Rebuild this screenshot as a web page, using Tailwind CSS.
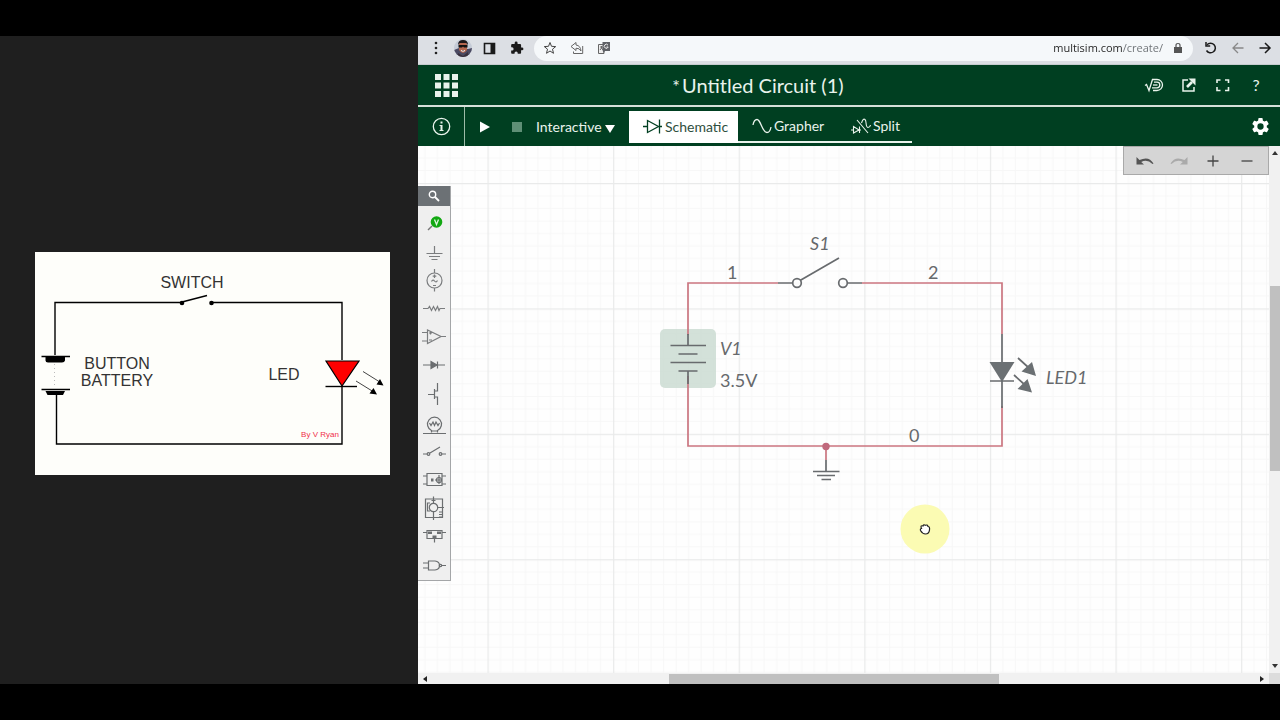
<!DOCTYPE html>
<html lang="en">
<head>
<meta charset="utf-8">
<title>Untitled Circuit (1)</title>
<script src="https://cdn.jsdelivr.net/npm/@tailwindcss/browser@4"></script>
</head>
<body class="flex h-screen overflow-hidden bg-black py-9 font-['Lato','Liberation_Sans',sans-serif]">

<!-- Circuit diagram to be rebuilt in the editor -->
<aside class="flex w-[418px] shrink-0 items-center bg-[#1f1f1f] pt-1.5 pr-7 pl-[35px]">
  <svg class="w-full bg-[#fefefa]" viewBox="0 0 355 223" role="img" aria-label="Switch, button battery and LED circuit" fill="none" stroke="#000" stroke-width="1.4" font-family="'Liberation Sans',Arial,sans-serif">
    <path d="M20 103V50.500H146M177 50.500H307V108M307 134V192H21.500V142"/>
    <path d="M147 50L172 43.500"/>
    <circle cx="147" cy="51" r="2.300" fill="#000" stroke="none"/>
    <circle cx="176.500" cy="51" r="2.300" fill="#000" stroke="none"/>
    <path d="M6.500 104.500H35M6.500 137.500H35"/>
    <path d="M10.500 105H30V108.500Q29.500 110.500 27 110.500H13Q10.500 110.500 10.500 108.500ZM10.500 139H30L28 143H12.500Z" fill="#000" stroke="none"/>
    <path d="M19.500 112V136" stroke="#bbb" stroke-width="1" stroke-dasharray="1 3"/>
    <path d="M291 109H324L307 134Z" fill="#fe0000" stroke-width="1.200"/>
    <path d="M290.500 134.500H322"/>
    <path d="M328 119.500L344 129.500M321 129L338 139.500" stroke="#444" stroke-width="1"/>
    <path d="M348.500 133.500L341.500 132.500L345 127ZM342 142.500L334.500 141.500L338.500 136Z" fill="#000" stroke="none"/>
    <g stroke="none" fill="#333" font-size="16" text-anchor="middle">
      <text x="157" y="36">SWITCH</text>
      <text x="82" y="117">BUTTON</text>
      <text x="82" y="134">BATTERY</text>
      <text x="249" y="128">LED</text>
      <text x="285" y="185" font-size="8" fill="#f0304a">By V Ryan</text>
    </g>
  </svg>
</aside>

<main class="flex min-w-0 flex-1 flex-col bg-white">

  <!-- Browser bar -->
  <div class="flex h-[29px] shrink-0 items-center border-b border-[#c6cccf] bg-[#dcdfe4] pr-0.5 pb-1 pl-1 text-[#202124]">
    <button class="grid w-[27px] place-items-center" aria-label="Menu"><svg width="20" height="16"><g fill="#222"><circle cx="10" cy="3" r="1.300"/><circle cx="10" cy="8" r="1.300"/><circle cx="10" cy="13" r="1.300"/></g></svg></button>
    <button class="grid w-[27px] place-items-center" aria-label="Profile">
      <svg width="18" height="18" viewBox="0 0 18 18"><clipPath id="av"><circle cx="9" cy="9" r="9"/></clipPath><g clip-path="url(#av)"><path d="M0 0H18V18H0Z" fill="#c5cbd6"/><path d="M0 11L5 9L14 10L18 9V18H0Z" fill="#4b4a62"/><path d="M5 5Q9 0 13 5V11Q9 17 5 11Z" fill="#b5674f"/><path d="M4 6Q4 1 9 1Q14 1 14 6L12 4H6Z" fill="#1c1719"/><path d="M4.500 6H13.500V8.500H10L9 7.500L8 8.500H4.500Z" fill="#111"/><path d="M7 11.500Q9 13 11 11.500" stroke="#fff"/><path d="M4 14L9 17L14 13V18H4Z" fill="#39303c"/></g></svg>
    </button>
    <button class="grid w-[27px] place-items-center" aria-label="Side panel"><svg width="13" height="13"><path d="M1.500 1.500H11.500V11.500H1.500Z" fill="none" stroke="#1a1a1a" stroke-width="1.600"/><path d="M7.500 1H12V12H7.500Z" fill="#1a1a1a"/></svg></button>
    <button class="grid w-[27px] place-items-center" aria-label="Extensions"><svg width="14" height="14" viewBox="0 0 24 24" fill="#1a1a1a"><path d="M20.500 11H19V7c0-1.100-.9-2-2-2h-4V3.500a2.500 2.500 0 0 0-5 0V5H4c-1.100 0-2 .9-2 2v3.800h1.500a2.700 2.700 0 0 1 0 5.400H2V20c0 1.100.9 2 2 2h3.800v-1.500a2.700 2.700 0 0 1 5.400 0V22H17c1.100 0 2-.9 2-2v-4h1.500a2.500 2.500 0 0 0 0-5z"/></svg></button>
    <div class="ml-1 flex h-[25px] flex-1 items-center rounded-full bg-[#f5f8fa] pr-2 pl-0.5">
      <button class="grid w-[27px] place-items-center" aria-label="Bookmark"><svg width="14" height="14" viewBox="0 0 14 14" fill="none" stroke="#444"><path d="M7 1.500L8.500 5.300L12.700 5.600L9.500 8.200L10.500 12.300L7 10L3.500 12.300L4.500 8.200L1.300 5.600L5.500 5.300Z"/></svg></button>
      <button class="grid w-[27px] place-items-center" aria-label="Share"><svg width="14" height="14" viewBox="0 0 14 14" fill="none" stroke="#666"><path d="M6 1.500L1 5.500L6 9.500V7.200Q9.500 7 11 10Q10.500 4.500 6 4Z"/><path d="M12.700 5V12.500H3.500V10.500"/></svg></button>
      <button class="grid w-[27px] place-items-center" aria-label="Translate"><svg width="14" height="14" viewBox="0 0 14 14"><path d="M1.500 3.500H7V12.500H1.500Z" fill="#eee" stroke="#666"/><path d="M3 6H6M4.500 5V7L3 9M4.500 7L6 9" stroke="#666" fill="none"/><path d="M5.500 1H13V10H8L6.500 12L5.500 9Z" fill="#5f6166"/><path d="M11 4.200A2 2 0 1 0 11.200 6H9.500" fill="none" stroke="#eee"/></svg></button>
      <input type="text" aria-label="Address" value="multisim.com/create/" class="min-w-0 flex-1 bg-[linear-gradient(to_left,#6b6f73_40px,#222_40px)] bg-clip-text text-right font-['Open_Sans','Noto_Sans',sans-serif] text-[11px] leading-5 text-transparent">
      <svg class="mr-0.5 ml-2.5" width="10" height="12" viewBox="0 0 10 12"><path d="M1 5H9V11H1Z" fill="#555"/><path d="M3 5V3.300Q3 1.500 5 1.500T7 3.300V5" fill="none" stroke="#555" stroke-width="1.200"/></svg>
    </div>
    <div class="ml-1 flex items-center">
      <button class="grid w-[27px] place-items-center" aria-label="Reload"><svg width="14" height="14" viewBox="0 0 14 14" fill="none" stroke="#1a1a1a" stroke-width="1.500"><path d="M3 3.700A4.800 4.800 0 1 1 2.500 9.500"/><path d="M2 1V5H6.200"/></svg></button>
      <button class="grid w-[27px] place-items-center" aria-label="Forward"><svg width="14" height="14" viewBox="0 0 14 14" fill="none" stroke="#888" stroke-width="1.300"><path d="M12.500 7H2M7 2L2 7L7 12"/></svg></button>
      <button class="grid w-[27px] place-items-center" aria-label="Back"><svg width="14" height="14" viewBox="0 0 14 14" fill="none" stroke="#1a1a1a" stroke-width="1.500"><path d="M1.500 7H12M7 2L12 7L7 12"/></svg></button>
    </div>
  </div>

  <!-- Title bar -->
  <header class="flex h-[42px] shrink-0 items-center border-b-2 border-[#d5e0d9] bg-[#003f21] text-[#e9f3ec]">
    <button class="grid w-14 place-items-center" aria-label="Apps"><svg width="23" height="23" fill="#e9f3ec"><path d="M0 0h6v6h-6zM8.500 0h6v6h-6zM17 0h6v6h-6zM0 8.500h6v6h-6zM8.500 8.500h6v6h-6zM17 8.500h6v6h-6zM0 17h6v6h-6zM8.500 17h6v6h-6zM17 17h6v6h-6z"/></svg></button>
    <h1 class="flex-1 text-center text-[20px] leading-6"><span class="mr-0.5 text-[18px]">*</span>Untitled Circuit (1)</h1>
    <div class="flex w-[238px] items-center justify-end gap-4 pr-4">
      <button aria-label="Interactive probe"><svg width="20" height="16" viewBox="0 0 20 16" fill="none" stroke="#e9f3ec" stroke-width="1.300"><path d="M1 8.500L2.500 7.500L5 13.500L8.500 2.500H13"/><path d="M13 2.500A5.500 5.500 0 0 1 13 13.500H9"/><path d="M10 5.200H13A2.800 2.800 0 0 1 13 10.800H8"/><path d="M9 8H13.500"/></svg></button>
      <button aria-label="Export"><svg width="18" height="18" viewBox="0 0 18 18" fill="none" stroke="#e9f3ec" stroke-width="1.500"><path d="M8 4H3V15H14V11"/><path d="M7 11L12 6" stroke-width="2.600"/><path d="M8.500 2.500H15.500V9.500Z" fill="#e9f3ec" stroke="none"/></svg></button>
      <button aria-label="Full screen"><svg width="18" height="18" viewBox="0 0 18 18" fill="none" stroke="#e9f3ec" stroke-width="1.600"><path d="M3 7V4H6.500M11 4H14.500V7M14.500 11V14.500H11M6.500 14.500H3V11"/></svg></button>
      <button class="w-4 text-center text-base" aria-label="Help">?</button>
    </div>
  </header>

  <!-- Toolbar -->
  <div class="flex h-[39px] shrink-0 items-center bg-[#003f21] text-[14px] text-[#e9f3ec]">
    <button class="grid w-[47px] place-items-center self-stretch border-r border-[#9dbba8]" aria-label="Info"><svg width="19" height="19" viewBox="0 0 19 19"><circle cx="9.500" cy="9.500" r="8.200" fill="none" stroke="#e9f3ec" stroke-width="1.300"/><path d="M8.500 4.500h2v2h-2zM7.500 8h3v5h1v1h-4v-1h1v-4h-1z" fill="#e9f3ec"/></svg></button>
    <button class="ml-2.5 grid w-5 place-items-center" aria-label="Run"><svg width="10" height="12"><path d="M0 0.500L10 6L0 11.500Z" fill="#fff"/></svg></button>
    <button class="ml-3 grid w-5 place-items-center" aria-label="Stop"><span class="block size-[10px] bg-[#5f8f76]"></span></button>
    <div class="relative ml-[9px] flex w-20 items-center">
      <select aria-label="Simulation mode" class="w-full appearance-none bg-transparent leading-5"><option>Interactive</option></select>
      <svg class="pointer-events-none absolute right-px bottom-1" width="10" height="8"><path d="M0 0H10L5 8Z" fill="#fff"/></svg>
    </div>
    <nav class="ml-[13px] flex h-8 border-b-2 border-[#e9f3ec]">
      <button class="-mb-0.5 flex w-[109px] items-center gap-0.5 bg-white pl-3.5 text-[#2e4e3d]"><svg width="20" height="16" viewBox="0 0 20 16" fill="none" stroke="#003f21" stroke-width="1.300"><path d="M0 7.500H4.500M4.500 1.500V13.500L15.500 7.500ZM16.500 0.500V14.500M16.500 7.500H19"/></svg>Schematic</button>
      <button class="flex w-[99px] items-center gap-0.5 pl-3.5"><svg width="20" height="16" viewBox="0 0 20 16" fill="none" stroke="#e9f3ec" stroke-width="1.300"><path d="M1 7Q2 1.500 5 1.500C9 1.500 10 14.500 15 14.500Q18 14.500 19 9"/></svg>Grapher</button>
      <button class="flex w-[75px] items-center gap-0.5 pl-3.5"><svg width="20" height="16" viewBox="0 0 20 16" fill="none" stroke="#e9f3ec" stroke-width="1.100"><path d="M0 12H2.500M2.500 8.500V15L8 12ZM8.500 8.500V15M8.500 12H10M6 2L17 15"/><path d="M10.500 5Q12 0 14 1.500C16 3 14 9 17 9.500Q19 9.500 19.500 7"/></svg>Split</button>
    </nav>
    <button class="mr-2.5 ml-auto grid w-5 place-items-center" aria-label="Settings"><svg width="21" height="21" viewBox="0 0 24 24" fill="#fff"><path d="M19.140 12.940c.04-.3.060-.61.060-.94s-.02-.64-.07-.94l2.030-1.580a.5.500 0 0 0 .12-.61l-1.920-3.320a.5.500 0 0 0-.59-.22l-2.390.96a7 7 0 0 0-1.620-.94l-.36-2.540A.5.500 0 0 0 13.920 2.400h-3.840a.5.500 0 0 0-.47.410L9.250 5.350c-.59.240-1.130.57-1.620.94l-2.390-.96a.5.500 0 0 0-.59.220L2.740 8.870a.5.500 0 0 0 .12.610l2.030 1.580a6 6 0 0 0 0 1.880l-2.030 1.580a.5.500 0 0 0-.12.610l1.920 3.320c.12.220.37.290.59.220l2.390-.96c.5.380 1.030.7 1.620.94l.36 2.540c.05.240.24.410.48.410h3.840c.24 0 .44-.17.470-.41l.36-2.540a7 7 0 0 0 1.620-.94l2.390.96c.22.080.47 0 .59-.22l1.920-3.320a.5.500 0 0 0-.12-.61zM12 15.600a3.600 3.600 0 1 1 0-7.200 3.600 3.600 0 0 1 0 7.200z"/></svg></button>
  </div>

  <div class="flex min-h-0 flex-1">
    <!-- Schematic canvas -->
    <div class="relative min-w-0 flex-1 overflow-hidden bg-[#fefefe]">
      <svg class="absolute inset-0 size-full" fill="none" aria-label="Schematic">
        <defs>
          <pattern id="grid" x="69.500" y="37" width="125.600" height="125.400" patternUnits="userSpaceOnUse">
            <path d="M13 0V126M25.500 0V126M38 0V126M50.500 0V126M63 0V126M75.500 0V126M88 0V126M100.500 0V126M113 0V126M0 13H126M0 25.500H126M0 38H126M0 50.500H126M0 63H126M0 75.500H126M0 88H126M0 100.500H126M0 113H126" stroke="#f7f7f7"/>
            <path d="M.5 0V126M0 .5H126" stroke="#e9eaea" stroke-width="1.500"/>
          </pattern>
        </defs>
        <rect width="100%" height="100%" fill="url(#grid)"/>
        <rect x="242" y="183" width="56" height="59" rx="5" fill="#c8d9cf" fill-opacity=".8"/>
        <g stroke="#cb7680" stroke-width="1.700">
          <path d="M360 137H270V189M270 230V300H584V260M584 188V137H444M408 300V314"/>
        </g>
        <circle cx="408" cy="300.500" r="3.700" fill="#c0697c"/>
        <g stroke="#686b6e" stroke-width="1.700">
          <path d="M360 137H374.500M429.500 137H444M382 134.500L421 112"/>
          <circle cx="379" cy="137" r="4.300"/><circle cx="425" cy="137" r="4.300"/>
          <path d="M270 188V199.500M252.500 199.500H288M260.500 208H279.500M252.500 216.500H288M260.500 225H279.500M270 225V238"/>
          <path d="M408 314V325.500M395 325.500H421.500M399 329.500H417M403.500 333.500H413"/>
          <path d="M584 188V262M572 235H596"/>
          <path d="M600 212L611 222M596 229L607 239"/>
        </g>
        <path d="M571.500 216H596.500L584 236ZM618 230L603.500 225.500L614 216ZM614 246.500L599.500 243L609.500 233Z" fill="#6b7073"/>
        <g fill="#66696c" font-size="18">
          <g font-style="italic"><text x="392" y="104">S1</text><text x="302" y="209">V1</text><text x="628" y="238">LED1</text></g>
          <text x="302" y="241">3.5V</text>
          <text x="309" y="133">1</text><text x="510" y="133">2</text><text x="491" y="296">0</text>
        </g>
        <circle cx="507" cy="383" r="24.500" fill="#fbfbac" fill-opacity=".92"/>
        <path d="M503.500 382.500Q502 379 505 380Q505.500 378 507.500 379.300Q509.500 378.300 510 380.500Q512 380.500 511.500 384Q511 388 507.500 388Q504.500 388 502.500 384.500Q502 382.500 503.500 382.500Z" fill="#fff" stroke="#222" stroke-width="1.200"/>
      </svg>

      <!-- Component palette -->
      <div class="absolute top-10 left-0 flex w-[33px] flex-col border-r border-b border-[#a4a6a8] bg-[#efefef] pb-0.5">
        <button class="mb-1 grid h-5 place-items-center bg-[#6c7175]" aria-label="Search"><svg width="12" height="12" fill="none" stroke="#fff" stroke-width="1.400"><circle cx="4.500" cy="4.500" r="3.200"/><path d="M7 7L11 11" stroke-width="1.800"/></svg></button>
        <button class="grid h-7 place-items-center" aria-label="Voltage probe"><svg width="24" height="28" viewBox="0 0 24 28"><path d="M6 20L10 16" stroke="#777" stroke-width="1.400"/><circle cx="14.500" cy="12" r="5.800" fill="#12a812"/><path d="M12.500 9.500L14.500 14.500L16.500 9.500" fill="none" stroke="#dff5df" stroke-width="1.300"/></svg></button>
        <button class="grid h-7 place-items-center" aria-label="Ground"><svg width="24" height="28" viewBox="0 0 24 28" fill="none" stroke="#7b7d7f" stroke-width="1.200"><path d="M12.500 8V15.500M4.500 15.500H20.500M7 18.500H18M9.500 21.500H15.500"/></svg></button>
        <button class="grid h-7 place-items-center" aria-label="Sources"><svg width="24" height="28" viewBox="0 0 24 28" fill="none" stroke="#7b7d7f" stroke-width="1.200"><circle cx="12.500" cy="14.500" r="7.500"/><path d="M12.500 3V7M12.500 22V25.500M12.500 8.500V12M10.700 10.200H14.300M9.500 15.500Q11 13 12.500 15T15.500 14.500M11 19.500H14"/></svg></button>
        <button class="grid h-7 place-items-center" aria-label="Passive"><svg width="24" height="28" viewBox="0 0 24 28" fill="none" stroke="#7b7d7f" stroke-width="1.200"><path d="M1 14.500H6L7.500 12.500L9.500 16.500L11.500 12.500L13.500 16.500L15.500 12.500L17 16.500L18 14.500H23"/></svg></button>
        <button class="grid h-7 place-items-center" aria-label="Analog"><svg width="24" height="28" viewBox="0 0 24 28" fill="none" stroke="#7b7d7f" stroke-width="1.200"><path d="M5.500 8V21.500L19 14.500ZM0 10.500H5.500M0 19H5.500M19 14.500H24M7 11H10M8.500 9.800V12.500M7 18H10"/></svg></button>
        <button class="grid h-7 place-items-center" aria-label="Diodes"><svg width="24" height="28" viewBox="0 0 24 28" fill="none" stroke="#6b6e70" stroke-width="1.200"><path d="M1 15H23M15.500 11.500V18.500"/><path d="M9 11.500V18.500L15 15Z" fill="#6b6e70"/></svg></button>
        <button class="grid h-7 place-items-center" aria-label="Transistors"><svg width="24" height="28" viewBox="0 0 24 28" fill="none" stroke="#6b6e70" stroke-width="1.200"><path d="M15.500 5V13H12.500M12.500 11V21M6 16.500H12.500M12.500 19H15.500V27"/></svg></button>
        <button class="grid h-8 place-items-center" aria-label="Indicators"><svg width="24" height="32" viewBox="0 0 24 32" fill="none" stroke="#6b6e70" stroke-width="1.200"><path d="M1 27.500H24M9.500 26.500V24.500A7 7 0 1 1 15.500 24.500V26.500M10 25H15M7.500 17L9 19.500L11 16L12.500 19.500L14 16L16 19.500L17.500 17"/></svg></button>
        <button class="grid h-7 place-items-center" aria-label="Switches"><svg width="24" height="28" viewBox="0 0 24 28" fill="none" stroke="#6b6e70" stroke-width="1.200"><path d="M1 16H5M20 16H24M8 15L18 9"/><circle cx="6.500" cy="16" r="1.300"/><circle cx="18.500" cy="16" r="1.300"/></svg></button>
        <button class="grid h-7 place-items-center" aria-label="Modeling blocks"><svg width="24" height="28" viewBox="0 0 24 28" fill="none" stroke="#6b6e70" stroke-width="1.200"><path d="M5 7.500H20V19.500H5ZM1 10H5M20 10H24M1 18H5M20 18H24M13 14H20M17 9V18"/><circle cx="17" cy="14" r="2.500"/><path d="M9 12.500h2.500v3h-2.500z" fill="#6b6e70" stroke="none"/></svg></button>
        <button class="grid h-7 place-items-center" aria-label="Electromechanical"><svg width="24" height="28" viewBox="0 0 24 28" fill="none" stroke="#6b6e70" stroke-width="1.200"><path d="M3.500 5V23.500H20.500V5ZM11.500 2.500V9M11.500 18V26M15.500 13.500H22M8 9H5.500V17H8M9.500 6.500H13.500M17 18H21M17 20.500H21M17 23H21"/><circle cx="11.500" cy="13.500" r="4.200"/></svg></button>
        <button class="grid h-7 place-items-center" aria-label="Connectors"><svg width="24" height="28" viewBox="0 0 24 28" fill="none" stroke="#6b6e70" stroke-width="1.200"><path d="M5 8.500H20V16.500H5ZM1 10.500H5M20 10.500H24M12.500 16.500V20.500"/><path d="M6 9.500h4v2.500h-4zM15 9.500h4v2.500h-4zM10.500 13.500h4v2.500h-4z" fill="#6b6e70" stroke="none"/></svg></button>
        <button class="grid h-7 place-items-center" aria-label="Digital"><svg width="24" height="28" viewBox="0 0 24 28" fill="none" stroke="#6b6e70" stroke-width="1.200"><path d="M6.500 11V20H13Q17.500 19.500 17.500 15.500T13 11ZM1 13H6.500M1 18H6.500M19.500 15.500H24"/><circle cx="18.500" cy="15.500" r="1.200"/></svg></button>
      </div>

      <!-- Edit and zoom controls -->
      <div class="absolute top-0 right-0 flex h-[29px] w-[146px] items-center justify-around border border-[#a9a9a9] bg-[#d5d5d5] px-1">
        <button aria-label="Undo"><svg width="18" height="14" viewBox="0 0 18 14"><path d="M.5 3V10.500H8L5.200 8Q11 4.500 16.500 10L17.500 9.500Q13 1.500 3.500 6Z" fill="#555"/></svg></button>
        <button aria-label="Redo"><svg width="18" height="14" viewBox="0 0 18 14"><path d="M17.500 3V10.500H10L12.800 8Q7 4.500 1.500 10L.5 9.500Q5 1.500 14.500 6Z" fill="#aaa"/></svg></button>
        <button aria-label="Zoom in"><svg width="18" height="14" viewBox="0 0 18 14"><path d="M3.500 7H14.500M9 1.500V12.500" stroke="#444" stroke-width="1.300"/></svg></button>
        <button aria-label="Zoom out"><svg width="18" height="14" viewBox="0 0 18 14"><path d="M3.500 7H14.500" stroke="#444" stroke-width="1.300"/></svg></button>
      </div>
    </div>

    <!-- Vertical scroll bar -->
    <div class="flex w-[11px] shrink-0 flex-col items-end bg-[#f1f1f1] pt-1">
      <svg class="self-center" width="6" height="6"><path d="M3 1L6 5H0Z" fill="#333"/></svg>
      <div class="mt-[130px] h-[185px] w-[10px] bg-[#c0c0c0]"></div>
      <svg class="mt-auto mb-1 self-center" width="6" height="6"><path d="M3 5L6 1H0Z" fill="#333"/></svg>
    </div>
  </div>

  <!-- Horizontal scroll bar -->
  <div class="flex h-[11px] shrink-0 items-center bg-[#f1f1f1]">
    <svg class="ml-1" width="6" height="6"><path d="M1 3L5 0V6Z" fill="#222"/></svg>
    <div class="ml-[28%] h-[10px] w-[330px] bg-[#c0c0c0]"></div>
    <svg class="ml-auto" width="6" height="6"><path d="M5 3L1 0V6Z" fill="#222"/></svg>
    <div class="ml-1 h-full w-[11px] bg-[#dcdcdc]"></div>
  </div>
</main>
</body>
</html>
